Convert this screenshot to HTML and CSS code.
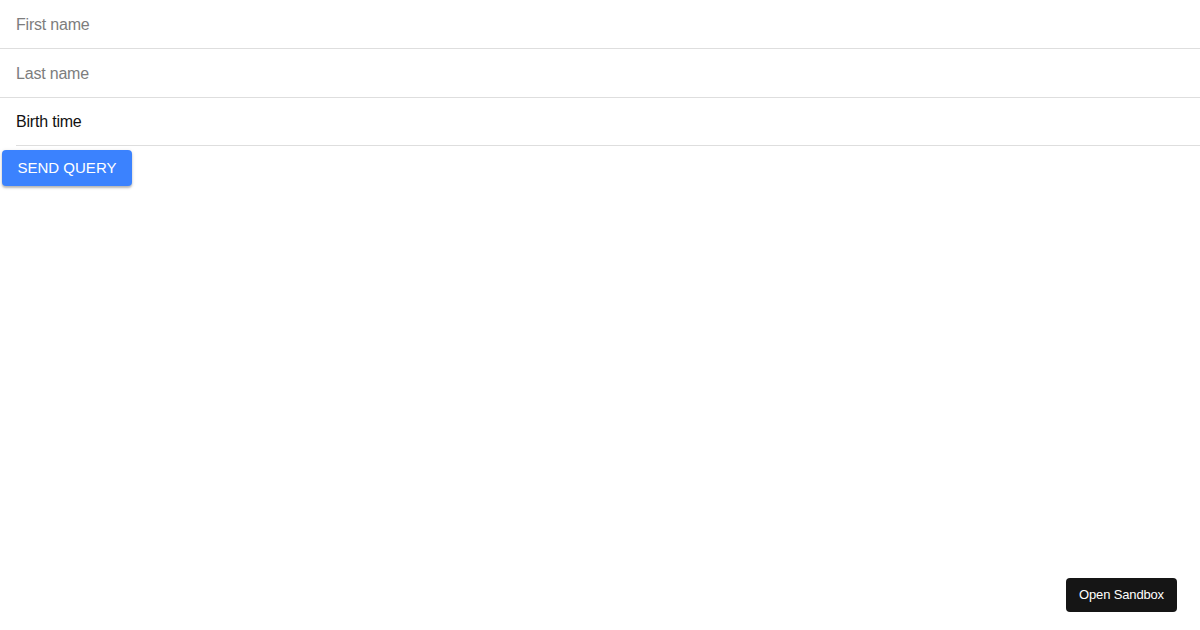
FILE: index.html
```html
<!DOCTYPE html>
<html>
<head>
<meta charset="utf-8">
<link rel="stylesheet" href="styles.css">
</head>
<body>
<div class="form">
  <div class="row full"><span class="ph">First name</span></div>
  <div class="row full"><span class="ph">Last name</span></div>
  <div class="row inset"><span class="val">Birth time</span></div>
  <button class="send">SEND QUERY</button>
</div>
<button class="sandbox">Open Sandbox</button>
</body>
</html>
```
FILE: styles.css
```css
html, body { margin: 0; padding: 0; background: #fff; }
body { font-family: "Liberation Sans", Arial, sans-serif; width: 1200px; height: 630px; position: relative; overflow: hidden; }
.form { display: flex; flex-direction: column; align-items: flex-start; }
.row { box-sizing: border-box; height: 49px; border-bottom: 1px solid #dedede; padding-top: 15px; font-size: 16px; line-height: 20px; letter-spacing: -0.2px; }
.full { width: 100%; padding-left: 16px; }
.inset { width: calc(100% - 16px); margin-left: 16px; height: 48px; padding-top: 14px; }
.ph { color: #7d7d7d; }
.val { color: #111; }
.send { margin: 4px 0 0 2px; height: 36px; width: 130px; padding: 0 0 2px; border: none; border-radius: 4px; background: #3b82fe; color: #fff; font-family: "Liberation Sans", Arial, sans-serif; font-size: 15px; letter-spacing: 0; box-shadow: 0 2px 2px rgba(0,0,0,0.22), 0 1px 4px rgba(0,0,0,0.12); }
.sandbox { position: absolute; left: 1066px; top: 578px; width: 111px; height: 34px; border: none; border-radius: 4px; background: #151515; color: #fff; font-family: "Liberation Sans", Arial, sans-serif; font-size: 13px; letter-spacing: -0.15px; padding: 0 0 2px; }
```
